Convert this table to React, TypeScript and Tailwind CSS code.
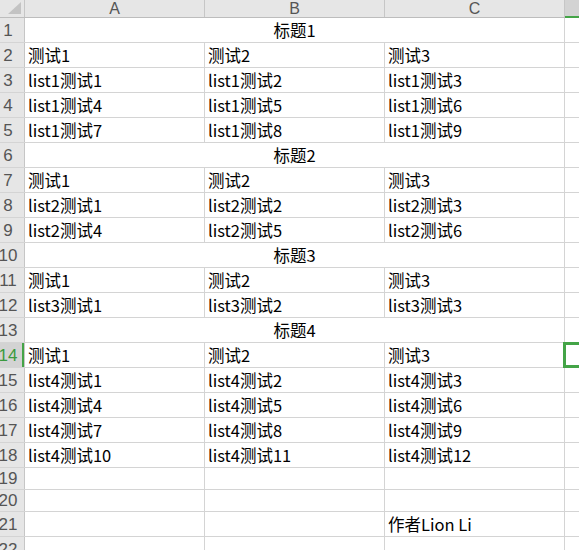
import React from "react";

type Row =
  | { n: number; kind: "title"; text: string; h?: number }
  | { n: number; kind: "cells"; cells: string[]; h?: number };

const rows: Row[] = [
  { n: 1, kind: "title", text: "标题1" },
  { n: 2, kind: "cells", cells: ["测试1", "测试2", "测试3"] },
  { n: 3, kind: "cells", cells: ["list1测试1", "list1测试2", "list1测试3"] },
  { n: 4, kind: "cells", cells: ["list1测试4", "list1测试5", "list1测试6"] },
  { n: 5, kind: "cells", cells: ["list1测试7", "list1测试8", "list1测试9"] },
  { n: 6, kind: "title", text: "标题2" },
  { n: 7, kind: "cells", cells: ["测试1", "测试2", "测试3"] },
  { n: 8, kind: "cells", cells: ["list2测试1", "list2测试2", "list2测试3"] },
  { n: 9, kind: "cells", cells: ["list2测试4", "list2测试5", "list2测试6"] },
  { n: 10, kind: "title", text: "标题3" },
  { n: 11, kind: "cells", cells: ["测试1", "测试2", "测试3"] },
  { n: 12, kind: "cells", cells: ["list3测试1", "list3测试2", "list3测试3"] },
  { n: 13, kind: "title", text: "标题4" },
  { n: 14, kind: "cells", cells: ["测试1", "测试2", "测试3"] },
  { n: 15, kind: "cells", cells: ["list4测试1", "list4测试2", "list4测试3"] },
  { n: 16, kind: "cells", cells: ["list4测试4", "list4测试5", "list4测试6"] },
  { n: 17, kind: "cells", cells: ["list4测试7", "list4测试8", "list4测试9"] },
  { n: 18, kind: "cells", cells: ["list4测试10", "list4测试11", "list4测试12"] },
  { n: 19, kind: "cells", cells: ["", "", ""], h: 22 },
  { n: 20, kind: "cells", cells: ["", "", ""], h: 22 },
  { n: 21, kind: "cells", cells: ["", "", "作者Lion Li"] },
  { n: 22, kind: "cells", cells: ["", "", ""] },
];

const SEL = 14;

const RowHead = ({ n }: { n: number }) => {
  const sel = n === SEL;
  return (
    <div
      className={
        "relative w-[25px] shrink-0 flex items-center overflow-hidden border-r border-[#c6c6c6] text-[17px] leading-none " +
        (sel ? "bg-[#d3d3d3] text-[#3a9a3e]" : "bg-[#e6e6e6] text-[#555]")
      }
      style={{ fontFamily: '"Liberation Sans", Arial, sans-serif' }}
    >
      <span className="w-[16px] flex justify-center whitespace-nowrap">{n}</span>
      {sel && <div className="absolute right-0 top-0 bottom-0 w-[2px] bg-[#44a447]" />}
    </div>
  );
};

const Cell = ({ text }: { text: string }) => (
  <div className="w-[180px] shrink-0 flex items-center pl-[3px] whitespace-nowrap border-r border-[#d4d4d4]">
    {text}
  </div>
);

export default function App() {
  return (
    <div
      className="w-[579px] h-[550px] overflow-hidden bg-white text-black text-[16.5px]"
      style={{ fontFamily: '"Noto Sans CJK SC", "Noto Sans", sans-serif' }}
    >
      {/* column header */}
      <div className="flex h-[18px] border-b border-[#bdbdbd] bg-[#e6e6e6] text-[#555] text-[16px] leading-none">
        <div className="w-[25px] shrink-0 border-r border-[#c6c6c6] relative">
          <svg className="absolute left-[8px] top-[2px]" width="13" height="12" viewBox="0 0 13 12">
            <polygon points="13,0 13,12 0,12" fill="#c3c3c3" />
          </svg>
        </div>
        {["A", "B", "C"].map((c) => (
          <div
            key={c}
            className="w-[180px] shrink-0 flex items-center justify-center border-r border-[#c6c6c6]"
            style={{ fontFamily: '"Liberation Sans", Arial, sans-serif' }}
          >
            {c}
          </div>
        ))}
        <div className="flex-1 bg-[#d3d3d3] border-b-2 border-[#44a447] -mb-px" />
      </div>

      {rows.map((r) => (
        <div key={r.n} className="flex border-b border-[#d4d4d4]" style={{ height: r.h ?? 25 }}>
          <RowHead n={r.n} />
          {r.kind === "title" ? (
            <div className="w-[540px] shrink-0 flex items-center justify-center border-r border-[#d4d4d4]">{r.text}</div>
          ) : (
            r.cells.map((c, i) => <Cell key={i} text={c} />)
          )}
          <div className="flex-1 relative">
            {r.n === SEL && (
              <div className="absolute -left-[2px] -top-px -right-[4px] -bottom-px border-[3px] border-[#44a447]" />
            )}
          </div>
        </div>
      ))}
    </div>
  );
}
